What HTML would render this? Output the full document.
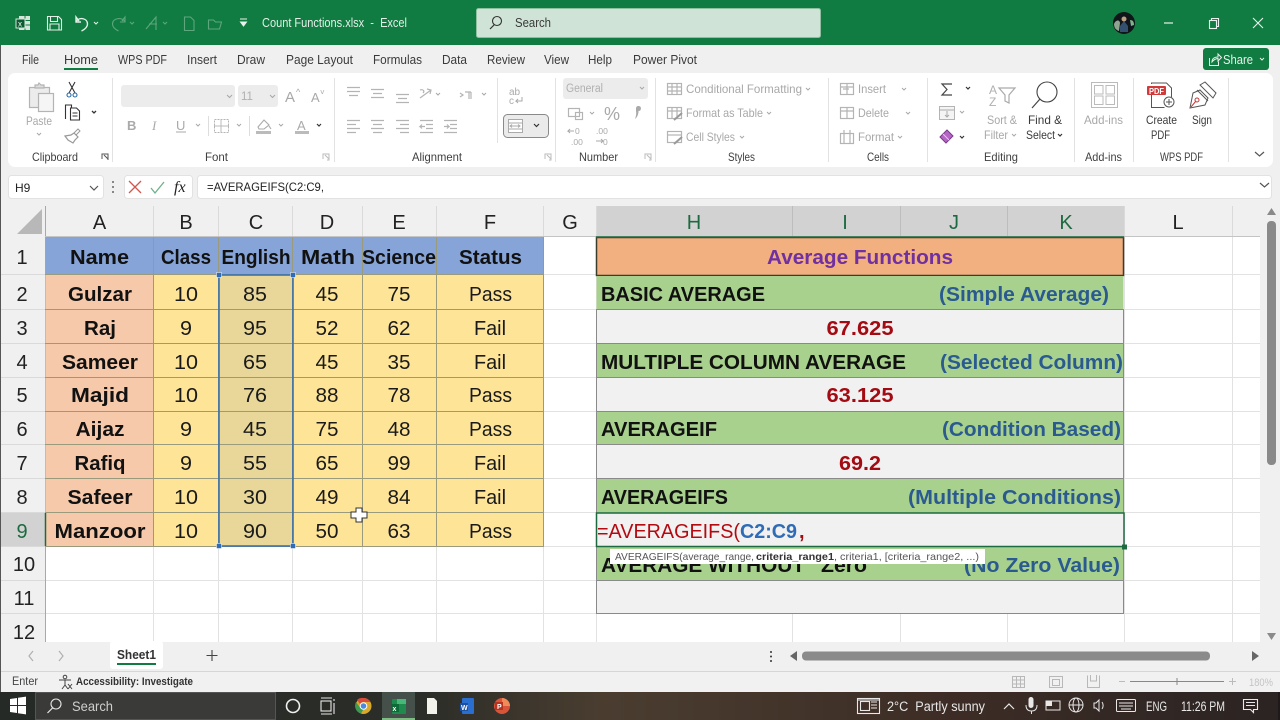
<!DOCTYPE html>
<html><head><meta charset="utf-8"><title>Count Functions.xlsx - Excel</title>
<style>
html,body{margin:0;padding:0;width:1280px;height:720px;overflow:hidden;background:#fff}
svg{display:block}
text{font-family:"Liberation Sans",sans-serif;white-space:pre}
.m{font-size:13px;fill:#3a3a3a}
.l{font-size:12px;fill:#404040}
.d{font-size:12px;fill:#a8a8a8}
.k{font-size:12px;fill:#3a3a3a}
.h{font-size:20px;fill:#222;text-anchor:middle}
.r{font-size:20px;fill:#222;text-anchor:middle}
.b{font-size:20px;font-weight:bold;fill:#111;text-anchor:middle}
.n{font-size:20px;fill:#1a1a1a;text-anchor:middle}
.rb{font-size:20px;font-weight:bold;fill:#111}
.bl{font-size:20px;font-weight:bold;fill:#2a5a8f}
.v{font-size:20px;font-weight:bold;fill:#a30a12;text-anchor:middle}
.gi{fill:none;stroke:#b4b4b4;stroke-width:1.2}
.di{fill:none;stroke:#555;stroke-width:1.2}
.ch{fill:none;stroke:#a8a8a8;stroke-width:1}
.cd{fill:none;stroke:#333;stroke-width:1.2}
</style></head><body>
<svg width="1280" height="720" viewBox="0 0 1280 720" xmlns="http://www.w3.org/2000/svg">
<defs><linearGradient id="tb" x1="0" x2="1" y1="0" y2="0"><stop offset="0" stop-color="#262a27"/><stop offset=".33" stop-color="#2b2d28"/><stop offset=".47" stop-color="#4a3d30"/><stop offset=".75" stop-color="#3c2c25"/><stop offset="1" stop-color="#2b2423"/></linearGradient></defs>
<rect width="1280" height="720" fill="#fff"/>
<!-- title bar -->
<rect width="1280" height="45" fill="#107c41"/>
<rect x="19" y="16" width="11" height="14" fill="#d5e5da"/><path d="M25 16v14M19 20.500h11M19 25h11" stroke="#107c41"/><rect x="16" y="19" width="9" height="9" fill="#0a5c30" stroke="#d5e5da"/><text x="18" y="26.500" font-size="8" fill="#fff">x</text>
<g fill="none" stroke="#e4efe8" stroke-width="1.100"><path d="M47.500 16.500h11l3 3v10.500h-14z"/><path d="M50.500 16.500v5h7v-5M50 30v-6h9v6"/><path d="M79 21l-3-4v5h5M76.500 21c3-4 11-3 11 3 0 3-2 5-6 7" stroke-width="1.400"/><path d="M94 22l2 2 2-2"/></g>
<g fill="none" stroke="#5ea67e" stroke-width="1.100"><path d="M122 21l3-4v5h-5M124.500 21c-3-4-12-3-12 3 0 3 2 5 6 7"/><path d="M130 22l2 2 2-2"/><path d="M146 29l10-12v13M149 24h8"/><path d="M163 22l2 2 2-2"/><path d="M184.500 17h6l3.500 3.500v10h-9.500z"/><path d="M208.500 20h5l2 2h6l-2 7h-11z"/></g>
<path d="M240 19h7M240.500 22h6l-3 4z" fill="#e8f2ec" stroke="#e8f2ec"/>
<text x="262" y="27" font-size="12.500" fill="#e4efe8" textLength="145" lengthAdjust="spacingAndGlyphs">Count Functions.xlsx  -  Excel</text>
<rect x="476.500" y="8.500" width="344" height="29" rx="2" fill="#cfe3d6" stroke="#8fbfa0"/>
<circle cx="497" cy="21" r="4.500" fill="none" stroke="#333" stroke-width="1.100"/><path d="M494 25l-4 4" stroke="#333" stroke-width="1.200"/>
<text x="515" y="27" font-size="13" fill="#3a3a3a" textLength="36" lengthAdjust="spacingAndGlyphs">Search</text>
<circle cx="1124" cy="23" r="11" fill="#10151a"/><path d="M1114 24c2-5 6-4 6-1l-1 8c-3-1-5-3-5-7z" fill="#8fa58f"/><path d="M1120 32v-6l4-5 4 5v6z" fill="#33506e"/><path d="M1130 20c3 0 4 2 4 5l-3 1z" fill="#7db48b"/><circle cx="1124" cy="19" r="2.500" fill="#c0a080"/>
<path d="M1164 23h9" stroke="#e8f2ec" stroke-width="1.200"/>
<g fill="none" stroke="#e8f2ec" stroke-width="1.100"><rect x="1209.500" y="20.500" width="7" height="8"/><path d="M1211.500 20.500v-2h7v8h-2"/><path d="M1253 18l10 10M1263 18l-10 10"/></g>
<!-- menu bar + ribbon bg -->
<rect y="45" width="1280" height="161" fill="#f0f0f0"/>
<text class="m" x="22" y="64" textLength="17" lengthAdjust="spacingAndGlyphs">File</text>
<text class="m" x="64" y="64" textLength="34" lengthAdjust="spacingAndGlyphs">Home</text>
<rect x="64" y="68" width="34" height="2" fill="#107c41"/>
<text class="m" x="118" y="64" textLength="49" lengthAdjust="spacingAndGlyphs">WPS PDF</text>
<text class="m" x="187" y="64" textLength="30" lengthAdjust="spacingAndGlyphs">Insert</text>
<text class="m" x="237" y="64" textLength="28" lengthAdjust="spacingAndGlyphs">Draw</text>
<text class="m" x="286" y="64" textLength="67" lengthAdjust="spacingAndGlyphs">Page Layout</text>
<text class="m" x="373" y="64" textLength="49" lengthAdjust="spacingAndGlyphs">Formulas</text>
<text class="m" x="442" y="64" textLength="25" lengthAdjust="spacingAndGlyphs">Data</text>
<text class="m" x="487" y="64" textLength="38" lengthAdjust="spacingAndGlyphs">Review</text>
<text class="m" x="544" y="64" textLength="25" lengthAdjust="spacingAndGlyphs">View</text>
<text class="m" x="588" y="64" textLength="24" lengthAdjust="spacingAndGlyphs">Help</text>
<text class="m" x="633" y="64" textLength="64" lengthAdjust="spacingAndGlyphs">Power Pivot</text>
<rect x="1203" y="48" width="66" height="22" rx="3" fill="#107c41"/>
<g fill="none" stroke="#e8f2ec" stroke-width="1"><path d="M1209.500 58v7.500h9v-4"/><path d="M1212 62c0-3 2-5 6-5v-3l3.500 3.500-3.500 3.500v-2.500c-2 0-4 1-6 3.500z"/><path d="M1260 58l2 2 2-2"/></g>
<text x="1223" y="64" font-size="13" fill="#e8f2ec" textLength="30" lengthAdjust="spacingAndGlyphs">Share</text>
<rect x="8" y="73" width="1265" height="94" rx="7" fill="#fff"/>
<!-- separators -->
<g stroke="#e2e2e2"><path d="M112.500 78v84M334.500 78v84M497.500 78v65M555.500 78v84M655.500 78v84M828.500 78v84M927.500 78v84M1074.500 78v84M1133.500 78v84M1228.500 78v84"/></g>
<!-- group labels -->
<text class="l" x="32" y="161" textLength="46" lengthAdjust="spacingAndGlyphs">Clipboard</text>
<text class="l" x="205" y="161" textLength="23" lengthAdjust="spacingAndGlyphs">Font</text>
<text class="l" x="412" y="161" textLength="50" lengthAdjust="spacingAndGlyphs">Alignment</text>
<text class="l" x="579" y="161" textLength="39" lengthAdjust="spacingAndGlyphs">Number</text>
<text class="l" x="728" y="161" textLength="27" lengthAdjust="spacingAndGlyphs">Styles</text>
<text class="l" x="867" y="161" textLength="22" lengthAdjust="spacingAndGlyphs">Cells</text>
<text class="l" x="984" y="161" textLength="34" lengthAdjust="spacingAndGlyphs">Editing</text>
<text class="l" x="1085" y="161" textLength="37" lengthAdjust="spacingAndGlyphs">Add-ins</text>
<text class="l" x="1160" y="161" textLength="43" lengthAdjust="spacingAndGlyphs">WPS PDF</text>
<!-- dialog launchers -->
<g fill="none" stroke="#555" stroke-width="1"><path d="M102 159v-5h6v6M104 155l4 4"/></g>
<g fill="none" stroke="#bbb" stroke-width="1"><path d="M323 159v-5h6v6h-2M325 155l4 4M545 159v-5h6v6h-2M547 155l4 4M645 159v-5h6v6h-2M647 155l4 4"/></g>
<!-- clipboard -->
<g class="gi" fill="#eee"><path d="M29.500 87.500h20v20h-20z" fill="#ececec"/><path d="M35 87v-2h3l1-2 2 2h3v3h-9z" fill="#ddd"/><rect x="38.500" y="93.500" width="15" height="18" fill="#f5f5f5"/></g>
<text class="d" x="26" y="125" textLength="26" lengthAdjust="spacingAndGlyphs">Paste</text>
<path class="ch" d="M37 133l2 2 2-2"/>
<g fill="none" stroke-width="1.100"><path d="M69 82l6 11M75 82l-6 11" stroke="#333"/><circle cx="69" cy="95" r="2" stroke="#2a6aa8"/><circle cx="75" cy="95" r="2" stroke="#2a6aa8"/></g>
<g fill="none" stroke="#333" stroke-width="1.100"><path d="M65.500 119v-14h6v3"/><path d="M70.500 108h6l3 3v9h-9zM72.500 113h5M72.500 116h5"/><path d="M92 111l2 2 2-2" stroke-width="1.300"/></g>
<path d="M65 136l6-1 3-2 4 4-3 3-2 3-5-3z" fill="none" stroke="#999" stroke-width="1.200"/><path d="M74 133l4-4 2 2-4 4" fill="none" stroke="#999"/>
<!-- font -->
<rect x="121" y="85" width="114" height="22" rx="3" fill="#ececec"/><rect x="238" y="85" width="40" height="22" rx="3" fill="#ececec"/>
<path class="ch" d="M227 95l2.500 2.500 2.500-2.500M270 95l2.500 2.500 2.500-2.500"/>
<text x="241" y="100" font-size="11.500" fill="#b0b0b0">11</text>
<text x="285" y="102" font-size="15" fill="#a8a8a8">A</text><text x="296" y="95" font-size="9" fill="#a8a8a8">^</text>
<text x="311" y="102" font-size="13" fill="#a8a8a8">A</text><text x="320" y="95" font-size="8" fill="#a8a8a8">˅</text>
<text x="127" y="130" font-size="13" font-weight="bold" fill="#aaa">B</text>
<text x="152" y="130" font-size="13" style="font-style:italic;font-family:'Liberation Serif',serif" fill="#aaa">I</text>
<text x="176" y="130" font-size="13" fill="#aaa">U</text><path d="M176 132h10" stroke="#aaa"/>
<path class="ch" d="M196 124l2 2 2-2"/><path d="M208.500 116v20M249.500 116v20" stroke="#ddd"/>
<rect x="214.500" y="119.500" width="14" height="13" fill="none" stroke="#b4b4b4" stroke-dasharray="2 1"/><path d="M214 126h15M221 119v14" stroke="#bbb"/>
<path class="ch" d="M237 124l2 2 2-2"/>
<path d="M258 127l6-7 5 5-5 4h-5zM269 126l2 3" fill="none" stroke="#aaa" stroke-width="1.100"/><rect x="256" y="131" width="15" height="3" fill="#bbb"/>
<path class="ch" d="M279 124l2 2 2-2"/>
<text x="297" y="130" font-size="13" fill="#aaa">A</text><rect x="295" y="131" width="14" height="3" fill="#bbb"/>
<path class="cd" d="M317 124l2 2 2-2"/>
<!-- alignment -->
<g class="gi"><path d="M347 87.500h13M347 91.500h13M349 95.500h9"/><path d="M371 89.500h13M373 93.500h9M371 97.500h13"/><path d="M396 94.500h13M398 98.500h9M396 102.500h13"/>
<path d="M420 98l11-8M427 89l4 1-1 4M420 90c3-1 5 1 3 3"/>
<path d="M460 93l3 2-3 2"/><path d="M465 92h6M469 92v7M471 92v7" /><path class="ch" d="M436 93l2 2 2-2M482 93l2 2 2-2"/>
<path d="M347 120.500h13M347 124.500h9M347 128.500h13M347 132.500h9"/><path d="M371 120.500h13M373 124.500h9M371 128.500h13M373 132.500h9"/><path d="M396 120.500h13M400 124.500h9M396 128.500h13M400 132.500h9"/>
<path d="M420 120.500h13M426 124.500h7M426 128.500h7M420 132.500h13M425 126.500h-5l2-2M420 126.500l2 2"/><path d="M444 120.500h13M450 124.500h7M450 128.500h7M444 132.500h13M444 126.500h5l-2-2M449 126.500l-2 2"/></g>
<text x="509" y="95" font-size="10" fill="#aaa">ab</text><text x="509" y="104" font-size="10" fill="#aaa">c</text><path d="M522 97v4h-6l2-2M516 101l2 2" fill="none" stroke="#aaa"/>
<rect x="503.500" y="114.500" width="45" height="23" rx="4" fill="#ebebeb" stroke="#8a8a8a"/>
<rect x="508.500" y="119.500" width="14" height="13" fill="#fff" stroke="#aaa"/><path d="M508 123h14M508 129h14M511 126h8M512 124.500l-2 1.500 2 1.500M518 124.500l2 1.500-2 1.500" stroke="#aaa" fill="none"/>
<path class="cd" d="M534 124l2.500 2.500 2.500-2.500"/>
<!-- number -->
<rect x="563" y="78" width="85" height="21" rx="3" fill="#ececec"/>
<text x="566" y="92" font-size="11.500" fill="#b0b0b0" textLength="37" lengthAdjust="spacingAndGlyphs">General</text>
<path class="ch" d="M640 87l2 2 2-2"/>
<rect x="568.500" y="108.500" width="11" height="8" class="gi"/><rect x="575.500" y="112.500" width="7" height="7" class="gi" fill="#fff"/>
<path class="ch" d="M590 112l2 2 2-2"/>
<text x="604" y="120" font-size="18" fill="#a8a8a8">%</text><path d="M636 108a2.500 2.500 0 1 1 2.500 3c0 3-1 6-3.500 8 1-3 1.500-5 1-8z" fill="#aaa"/>
<text x="575" y="134" font-size="8.500" fill="#aaa">0</text><text x="571" y="145" font-size="8.500" fill="#aaa">.00</text><path class="ch" d="M574 131h-6l2-2M568 131l2 2"/>
<text x="596" y="134" font-size="8.500" fill="#aaa">.00</text><text x="603" y="145" font-size="8.500" fill="#aaa">0</text><path class="ch" d="M596 141h7l-2-2M603 141l-2 2"/>
<!-- styles -->
<g class="gi"><rect x="667.500" y="83.500" width="14" height="11"/><path d="M667 87h15M667 91h15M672 83v11M677 83v11"/><rect x="667.500" y="107.500" width="14" height="11"/><path d="M667 111h15M672 107v11M677 107v11"/><path d="M674 120l8-7" stroke-width="2" stroke="#999"/><rect x="667.500" y="131.500" width="14" height="11"/><path d="M674 144l8-7" stroke-width="2" stroke="#999"/><path d="M667 135h15"/></g>
<text class="d" x="686" y="93" textLength="116" lengthAdjust="spacingAndGlyphs">Conditional Formatting</text><path class="ch" d="M806 88l2 2 2-2"/>
<text class="d" x="686" y="117" textLength="77" lengthAdjust="spacingAndGlyphs">Format as Table</text><path class="ch" d="M767 112l2 2 2-2"/>
<text class="d" x="686" y="141" textLength="49" lengthAdjust="spacingAndGlyphs">Cell Styles</text><path class="ch" d="M740 136l2 2 2-2"/>
<!-- cells -->
<g class="gi"><rect x="840.500" y="83.500" width="13" height="11"/><path d="M840 87h14M847 83v11M843 89h6"/><rect x="840.500" y="107.500" width="13" height="11"/><path d="M840 111h14M847 107v11"/><rect x="840.500" y="133.500" width="13" height="10"/><path d="M844 130v14M850 130v14"/></g>
<text class="d" x="858" y="93" textLength="28" lengthAdjust="spacingAndGlyphs">Insert</text><path class="ch" d="M902 88l2 2 2-2"/>
<text class="d" x="858" y="117" textLength="31" lengthAdjust="spacingAndGlyphs">Delete</text><path class="ch" d="M906 112l2 2 2-2"/>
<text class="d" x="858" y="141" textLength="36" lengthAdjust="spacingAndGlyphs">Format</text><path class="ch" d="M898 136l2 2 2-2"/>
<!-- editing -->
<path d="M952 84h-10l5 5.500-5 5.500h10" fill="none" stroke="#444" stroke-width="1.200"/><path class="cd" d="M966 87l2 2 2-2"/>
<rect x="939.500" y="106.500" width="15" height="13" fill="#f4f4f4" stroke="#b4b4b4"/><path d="M939 110h15M947 111v6M945 115l2 2 2-2" stroke="#aaa" fill="none"/><path class="ch" d="M960 111l2 2 2-2"/>
<path d="M940 137l7-7 6 6-7 7z" fill="#b565c4" stroke="#7a3a88"/><path d="M943 134l6 6" stroke="#e6c6ec"/><path class="cd" d="M960 136l2 2 2-2"/>
<text x="989" y="94" font-size="12" fill="#b0b0b0">A</text><text x="989" y="106" font-size="12" fill="#b0b0b0">Z</text>
<path d="M999 88h16l-6 7v8l-4-2v-6z" fill="none" stroke="#aaa" stroke-width="1.200"/>
<text class="d" x="987" y="124" textLength="30" lengthAdjust="spacingAndGlyphs">Sort &amp;</text>
<text class="d" x="984" y="139" textLength="24" lengthAdjust="spacingAndGlyphs">Filter</text><path class="ch" d="M1012 134l2 2 2-2"/>
<circle cx="1047" cy="92" r="10" fill="none" stroke="#444" stroke-width="1.100"/><path d="M1040 99l-8 9" stroke="#444" stroke-width="1.200"/>
<text class="k" x="1028" y="124" textLength="34" lengthAdjust="spacingAndGlyphs">Find &amp;</text>
<text class="k" x="1026" y="139" textLength="29" lengthAdjust="spacingAndGlyphs">Select</text><path class="cd" d="M1058 134l2 2 2-2"/>
<rect x="1091.500" y="82.500" width="26" height="25" fill="none" stroke="#bbb"/><rect x="1094.500" y="85.500" width="8.500" height="8.500" fill="none" stroke="#bbb"/><rect x="1106" y="85.500" width="8.500" height="8.500" fill="none" stroke="#bbb"/><rect x="1094.500" y="96" width="8.500" height="8.500" fill="none" stroke="#bbb"/><rect x="1106" y="96" width="8.500" height="8.500" fill="none" stroke="#bbb"/>
<text class="d" x="1084" y="124" textLength="39" lengthAdjust="spacingAndGlyphs">Add-ins</text>
<path d="M1151.500 94v13.500h13M1151.500 84v-1h15l5 5v9" fill="none" stroke="#555"/>
<rect x="1147" y="86" width="19" height="9" rx="1" fill="#cf3b3b"/><text x="1149" y="94" font-size="8" font-weight="bold" fill="#fff" textLength="15" lengthAdjust="spacingAndGlyphs">PDF</text>
<circle cx="1169" cy="102" r="5" fill="#fff" stroke="#555"/><path d="M1169 99v6M1166 102h6" stroke="#555"/>
<text class="k" x="1146" y="124" textLength="31" lengthAdjust="spacingAndGlyphs">Create</text>
<text class="k" x="1151" y="139" textLength="19" lengthAdjust="spacingAndGlyphs">PDF</text>
<path d="M1190 108l3-15 7-3 8 8-3 7zM1200 85l5-3 11 11-3 5zM1197 90l11 11" fill="none" stroke="#555"/><circle cx="1197" cy="100" r="2" fill="none" stroke="#c23b3b"/><path d="M1191 107l5-6" stroke="#c23b3b"/>
<text class="k" x="1192" y="124" textLength="20" lengthAdjust="spacingAndGlyphs">Sign</text>
<path d="M1255 152l4.500 4 4.500-4" fill="none" stroke="#555" stroke-width="1.200"/>
<!-- formula bar -->
<rect x="8.500" y="175.500" width="95" height="23" rx="3" fill="#fff" stroke="#e2e2e2"/>
<text x="15" y="192" font-size="12" fill="#222">H9</text>
<path d="M90 186l4 4 4-4" fill="none" stroke="#555" stroke-width="1.200"/>
<circle cx="113" cy="182" r="1" fill="#666"/><circle cx="113" cy="187" r="1" fill="#666"/><circle cx="113" cy="192" r="1" fill="#666"/>
<rect x="124.500" y="175.500" width="68" height="23" rx="3" fill="#fff" stroke="#e2e2e2"/>
<path d="M129 181l12 12M141 181l-12 12" stroke="#d0574f" stroke-width="1.300"/>
<path d="M151 188l4 5 9-11" fill="none" stroke="#6fb08a" stroke-width="1.300"/>
<text x="174" y="192" font-size="16" style="font-style:italic;font-family:'Liberation Serif',serif" fill="#222">fx</text>
<rect x="197.500" y="175.500" width="1074" height="23" rx="3" fill="#fff" stroke="#e2e2e2"/>
<text x="207" y="191" font-size="12" fill="#222" textLength="117" lengthAdjust="spacingAndGlyphs">=AVERAGEIFS(C2:C9,</text>
<path d="M1260 183l4.500 4 4.500-4" fill="none" stroke="#555" stroke-width="1.200"/>
<!-- headers -->
<rect x="0" y="206" width="45" height="436" fill="#f0f0f0"/>
<rect x="45" y="206" width="1215" height="31" fill="#f0f0f0"/>
<path d="M42 209v25h-25z" fill="#b8b8b8"/>
<rect x="596" y="206" width="528" height="31" fill="#d2d2d2"/>
<rect x="0" y="513" width="45" height="33" fill="#d2d2d2"/>
<g stroke="#dadada"><path d="M153.500 206v31M218.500 206v31M292.500 206v31M362.500 206v31M436.500 206v31M543.500 206v31M596.500 206v31M1124.500 206v31M1232.500 206v31"/><path d="M792.500 206v31M900.500 206v31M1007.500 206v31" stroke="#bdbdbd"/><path d="M0 274.500h45M0 309.500h45M0 343.500h45M0 377.500h45M0 411.500h45M0 444.500h45M0 478.500h45M0 512.500h45M0 546.500h45M0 580.500h45M0 613.500h45"/></g>
<text class="h" x="99.500" y="229">A</text><text class="h" x="186" y="229">B</text><text class="h" x="256" y="229">C</text><text class="h" x="327" y="229">D</text><text class="h" x="399" y="229">E</text><text class="h" x="490" y="229">F</text><text class="h" x="570" y="229">G</text>
<text class="h" style="fill:#1c6b40" x="694" y="229">H</text><text class="h" style="fill:#1c6b40" x="845" y="229">I</text><text class="h" style="fill:#1c6b40" x="954" y="229">J</text><text class="h" style="fill:#1c6b40" x="1066" y="229">K</text>
<text class="h" x="1178" y="229">L</text>
<text class="r" x="22" y="264">1</text><text class="r" x="22" y="301">2</text><text class="r" x="22" y="335">3</text><text class="r" x="22" y="369">4</text><text class="r" x="22" y="402">5</text><text class="r" x="22" y="436">6</text><text class="r" x="22" y="470">7</text><text class="r" x="22" y="504">8</text><text class="r" style="fill:#1c6b40" x="22" y="538">9</text><text class="r" x="24" y="571">10</text><text class="r" x="24" y="605">11</text><text class="r" x="24" y="639">12</text>
<!-- gridlines -->
<g stroke="#e2e2e2"><path d="M153.500 237v405M218.500 237v405M292.500 237v405M362.500 237v405M436.500 237v405M543.500 237v405M596.500 237v405M792.500 613v29M900.500 613v29M1007.500 613v29M1124.500 237v405M1232.500 237v405"/>
<path d="M45 274.500h1215M45 309.500h1215M45 343.500h1215M45 377.500h1215M45 411.500h1215M45 444.500h1215M45 478.500h1215M45 512.500h1215M45 546.500h1215M45 580.500h1215M45 613.500h1215"/></g>
<path d="M45.500 206v436" stroke="#a8a8a8"/><path d="M45 236.500h1215" stroke="#c4c4c4"/>
<!-- left table -->
<rect x="45.500" y="237" width="498" height="38" fill="#86a4d8"/>
<rect x="45.500" y="275" width="108" height="271" fill="#f6c9ab"/>
<rect x="153.500" y="275" width="390" height="271" fill="#fee496"/>
<rect x="219" y="275" width="74" height="271" fill="#e8d799"/>
<g stroke="#9a9a7c"><path d="M153.500 237v309M218.500 237v309M292.500 237v309M362.500 237v309M436.500 237v309M543.500 237v309"/>
<path d="M45 274.500h499M45 309.500h499M45 343.500h499M45 377.500h499M45 411.500h499M45 444.500h499M45 478.500h499M45 512.500h499M45 546.500h499"/></g>
<text class="b" x="99.500" y="264" textLength="59" lengthAdjust="spacingAndGlyphs">Name</text><text class="b" x="186" y="264" textLength="50" lengthAdjust="spacingAndGlyphs">Class</text><text class="b" x="256" y="264" textLength="69" lengthAdjust="spacingAndGlyphs">English</text><text class="b" x="328" y="264" textLength="54" lengthAdjust="spacingAndGlyphs">Math</text><text class="b" x="399" y="264" textLength="74" lengthAdjust="spacingAndGlyphs">Science</text><text class="b" x="490.500" y="264" textLength="63" lengthAdjust="spacingAndGlyphs">Status</text>
<text class="b" x="100" y="301" textLength="64" lengthAdjust="spacingAndGlyphs">Gulzar</text><text class="n" x="186" y="301" textLength="24" lengthAdjust="spacingAndGlyphs">10</text><text class="n" x="255" y="301" textLength="24" lengthAdjust="spacingAndGlyphs">85</text><text class="n" x="327" y="301" textLength="23" lengthAdjust="spacingAndGlyphs">45</text><text class="n" x="399" y="301" textLength="23" lengthAdjust="spacingAndGlyphs">75</text><text class="n" x="490.500" y="301" textLength="43" lengthAdjust="spacingAndGlyphs">Pass</text>
<text class="b" x="100" y="335" textLength="32" lengthAdjust="spacingAndGlyphs">Raj</text><text class="n" x="186" y="335" textLength="12" lengthAdjust="spacingAndGlyphs">9</text><text class="n" x="255" y="335" textLength="24" lengthAdjust="spacingAndGlyphs">95</text><text class="n" x="327" y="335" textLength="23" lengthAdjust="spacingAndGlyphs">52</text><text class="n" x="399" y="335" textLength="23" lengthAdjust="spacingAndGlyphs">62</text><text class="n" x="490" y="335" textLength="32" lengthAdjust="spacingAndGlyphs">Fail</text>
<text class="b" x="100" y="369" textLength="76" lengthAdjust="spacingAndGlyphs">Sameer</text><text class="n" x="186" y="369" textLength="24" lengthAdjust="spacingAndGlyphs">10</text><text class="n" x="255" y="369" textLength="24" lengthAdjust="spacingAndGlyphs">65</text><text class="n" x="327" y="369" textLength="23" lengthAdjust="spacingAndGlyphs">45</text><text class="n" x="399" y="369" textLength="23" lengthAdjust="spacingAndGlyphs">35</text><text class="n" x="490" y="369" textLength="32" lengthAdjust="spacingAndGlyphs">Fail</text>
<text class="b" x="100" y="402" textLength="58" lengthAdjust="spacingAndGlyphs">Majid</text><text class="n" x="186" y="402" textLength="24" lengthAdjust="spacingAndGlyphs">10</text><text class="n" x="255" y="402" textLength="24" lengthAdjust="spacingAndGlyphs">76</text><text class="n" x="327" y="402" textLength="23" lengthAdjust="spacingAndGlyphs">88</text><text class="n" x="399" y="402" textLength="23" lengthAdjust="spacingAndGlyphs">78</text><text class="n" x="490.500" y="402" textLength="43" lengthAdjust="spacingAndGlyphs">Pass</text>
<text class="b" x="100" y="436" textLength="49" lengthAdjust="spacingAndGlyphs">Aijaz</text><text class="n" x="186" y="436" textLength="12" lengthAdjust="spacingAndGlyphs">9</text><text class="n" x="255" y="436" textLength="24" lengthAdjust="spacingAndGlyphs">45</text><text class="n" x="327" y="436" textLength="23" lengthAdjust="spacingAndGlyphs">75</text><text class="n" x="399" y="436" textLength="23" lengthAdjust="spacingAndGlyphs">48</text><text class="n" x="490.500" y="436" textLength="43" lengthAdjust="spacingAndGlyphs">Pass</text>
<text class="b" x="100" y="470" textLength="51" lengthAdjust="spacingAndGlyphs">Rafiq</text><text class="n" x="186" y="470" textLength="12" lengthAdjust="spacingAndGlyphs">9</text><text class="n" x="255" y="470" textLength="24" lengthAdjust="spacingAndGlyphs">55</text><text class="n" x="327" y="470" textLength="23" lengthAdjust="spacingAndGlyphs">65</text><text class="n" x="399" y="470" textLength="23" lengthAdjust="spacingAndGlyphs">99</text><text class="n" x="490" y="470" textLength="32" lengthAdjust="spacingAndGlyphs">Fail</text>
<text class="b" x="100" y="504" textLength="65" lengthAdjust="spacingAndGlyphs">Safeer</text><text class="n" x="186" y="504" textLength="24" lengthAdjust="spacingAndGlyphs">10</text><text class="n" x="255" y="504" textLength="24" lengthAdjust="spacingAndGlyphs">30</text><text class="n" x="327" y="504" textLength="23" lengthAdjust="spacingAndGlyphs">49</text><text class="n" x="399" y="504" textLength="23" lengthAdjust="spacingAndGlyphs">84</text><text class="n" x="490" y="504" textLength="32" lengthAdjust="spacingAndGlyphs">Fail</text>
<text class="b" x="100" y="538" textLength="91" lengthAdjust="spacingAndGlyphs">Manzoor</text><text class="n" x="186" y="538" textLength="24" lengthAdjust="spacingAndGlyphs">10</text><text class="n" x="255" y="538" textLength="24" lengthAdjust="spacingAndGlyphs">90</text><text class="n" x="327" y="538" textLength="23" lengthAdjust="spacingAndGlyphs">50</text><text class="n" x="399" y="538" textLength="23" lengthAdjust="spacingAndGlyphs">63</text><text class="n" x="490.500" y="538" textLength="43" lengthAdjust="spacingAndGlyphs">Pass</text>
<!-- C2:C9 range -->
<rect x="219" y="275" width="74" height="271" fill="none" stroke="#2f6cb5" stroke-width="1.500"/>
<g fill="#2f6cb5" stroke="#fff" stroke-width=".5"><rect x="216.500" y="272.500" width="5" height="5"/><rect x="290.500" y="272.500" width="5" height="5"/><rect x="216.500" y="543.500" width="5" height="5"/><rect x="290.500" y="543.500" width="5" height="5"/></g>
<path d="M45.500 513v33" stroke="#1c6b40" stroke-width="1.500"/>
<!-- right table -->
<rect x="596.500" y="237.500" width="527" height="38" fill="#f2af80" stroke="#3c3c2c" stroke-width="1.500"/>
<path d="M596 237h528" stroke="#1c6b40" stroke-width="1.500"/>
<rect x="596.500" y="276" width="527" height="337.500" fill="#f1f1f1"/>
<g fill="#a9d18e"><rect x="596.500" y="276" width="527" height="33.500"/><rect x="596.500" y="343.500" width="527" height="34"/><rect x="596.500" y="411.500" width="527" height="33"/><rect x="596.500" y="478.500" width="527" height="34"/><rect x="596.500" y="546.500" width="527" height="34"/></g>
<g stroke="#8a8a8a" fill="none"><path d="M596.500 309.500v304h527v-304"/><path d="M596 309.500h528M596 343.500h528M596 377.500h528M596 411.500h528M596 444.500h528M596 478.500h528M596 580.500h528"/></g>
<text x="860" y="264" font-size="20" font-weight="bold" fill="#7030a0" text-anchor="middle" textLength="186" lengthAdjust="spacingAndGlyphs">Average Functions</text>
<text class="rb" x="601" y="301" textLength="164" lengthAdjust="spacingAndGlyphs">BASIC AVERAGE</text>
<text class="bl" x="939" y="301" textLength="170" lengthAdjust="spacingAndGlyphs">(Simple Average)</text>
<text class="v" x="860" y="335" textLength="67" lengthAdjust="spacingAndGlyphs">67.625</text>
<text class="rb" x="601" y="369" textLength="305" lengthAdjust="spacingAndGlyphs">MULTIPLE COLUMN AVERAGE</text>
<text class="bl" x="940" y="369" textLength="183" lengthAdjust="spacingAndGlyphs">(Selected Column)</text>
<text class="v" x="860" y="402" textLength="67" lengthAdjust="spacingAndGlyphs">63.125</text>
<text class="rb" x="601" y="436" textLength="116" lengthAdjust="spacingAndGlyphs">AVERAGEIF</text>
<text class="bl" x="942" y="436" textLength="179" lengthAdjust="spacingAndGlyphs">(Condition Based)</text>
<text class="v" x="860" y="470" textLength="42" lengthAdjust="spacingAndGlyphs">69.2</text>
<text class="rb" x="601" y="504" textLength="127" lengthAdjust="spacingAndGlyphs">AVERAGEIFS</text>
<text class="bl" x="908" y="504" textLength="213" lengthAdjust="spacingAndGlyphs">(Multiple Conditions)</text>
<text class="rb" x="601" y="572" textLength="204" lengthAdjust="spacingAndGlyphs">AVERAGE WITHOUT</text>
<text class="rb" x="821" y="572" textLength="46" lengthAdjust="spacingAndGlyphs">Zero</text>
<text class="bl" x="964" y="572" textLength="156" lengthAdjust="spacingAndGlyphs">(No Zero Value)</text>
<!-- active H9 -->
<rect x="596.500" y="513" width="527.500" height="33.500" fill="#f1f1f1" stroke="#1c6b40" stroke-width="1.500"/>
<rect x="1122" y="544.500" width="5" height="5" fill="#1c6b40"/>
<text x="597" y="538" font-size="20" fill="#b30a12" textLength="143" lengthAdjust="spacingAndGlyphs">=AVERAGEIFS(</text>
<text x="740" y="538" font-size="20" fill="#2f6cb5" font-weight="bold" textLength="57" lengthAdjust="spacingAndGlyphs">C2:C9</text>
<text x="799" y="538" font-size="20" fill="#a30a12" font-weight="bold">,</text>
<!-- tooltip -->
<rect x="610" y="549" width="375" height="15" fill="#fff"/>
<text x="615" y="560" font-size="10.500" fill="#555" textLength="139" lengthAdjust="spacingAndGlyphs">AVERAGEIFS(average_range,</text>
<text x="756" y="560" font-size="10.500" font-weight="bold" fill="#333" textLength="78" lengthAdjust="spacingAndGlyphs">criteria_range1</text>
<text x="834" y="560" font-size="10.500" fill="#555" textLength="145" lengthAdjust="spacingAndGlyphs">, criteria1, [criteria_range2, ...)</text>
<!-- cursor -->
<path d="M356 508h6v4h5v6h-5v4h-6v-4h-5v-6h5z" fill="#fff" stroke="#333"/>
<!-- vertical scrollbar -->
<rect x="1260" y="206" width="20" height="436" fill="#f0f0f0"/>
<path d="M1271.500 208l-4.500 7h9z" fill="#8a8a8a"/>
<rect x="1267" y="221" width="9" height="244" rx="4" fill="#8a8a8a"/>
<path d="M1271.500 640l-4.500-7h9z" fill="#8a8a8a"/>
<!-- sheet bar -->
<rect x="0" y="642" width="1280" height="30" fill="#f0f0f0"/>
<path d="M0 671.500h1280" stroke="#d6d6d6"/>
<rect x="110" y="641" width="53" height="28" rx="3" fill="#fff"/>
<text x="117" y="659" font-size="12.500" font-weight="bold" fill="#333" textLength="39" lengthAdjust="spacingAndGlyphs">Sheet1</text>
<rect x="117" y="663" width="39" height="2" fill="#107c41"/>
<path d="M33 651l-4 5 4 5M59 651l4 5-4 5" fill="none" stroke="#b0b0b0" stroke-width="1.200"/>
<path d="M212 650v11M206.500 655.500h11" stroke="#444" stroke-width="1.100"/>
<circle cx="771" cy="652" r="1" fill="#333"/><circle cx="771" cy="656.500" r="1" fill="#333"/><circle cx="771" cy="661" r="1" fill="#333"/>
<path d="M790 656l7-5v10z" fill="#666"/><path d="M1259 656l-7-5v10z" fill="#666"/>
<rect x="802" y="651.500" width="408" height="9" rx="4" fill="#8a8a8a"/>
<!-- status bar -->
<rect x="0" y="672" width="1280" height="20" fill="#f1f1f1"/>
<text x="12" y="685" font-size="11.500" fill="#444" textLength="26" lengthAdjust="spacingAndGlyphs">Enter</text>
<g fill="none" stroke="#444"><circle cx="65" cy="677" r="1.800"/><path d="M59 680h12M65 680v5l-3 4M65 685l3 4M68 684l4 5M72 684l-4 5"/></g>
<text x="76" y="685" font-size="11" font-weight="bold" fill="#333" textLength="117" lengthAdjust="spacingAndGlyphs">Accessibility: Investigate</text>
<g fill="none" stroke="#b8b8b8"><rect x="1012.500" y="676.500" width="12" height="11"/><path d="M1012 680h13M1012 684h13M1016.500 676v12M1020.500 676v12"/><rect x="1049.500" y="676.500" width="13" height="11"/><rect x="1052.500" y="679.500" width="7" height="6"/><path d="M1087.500 675.500v12h12v-12M1090.500 675v6h6v-6"/></g>
<path d="M1119 681.500h6M1229 681.500h7M1232.500 678v7" stroke="#bbb"/>
<path d="M1130 681.500h94M1177 678v7" stroke="#888"/>
<text x="1249" y="686" font-size="11" fill="#c4c4c4" textLength="24" lengthAdjust="spacingAndGlyphs">180%</text>
<path d="M0.500 45v647" stroke="#555"/>
<!-- taskbar -->
<rect x="0" y="692" width="1280" height="28" fill="url(#tb)"/>
<g fill="#fff"><path d="M10 699l7-1v7h-7zM18 697.800l8-1.200v8.400h-8zM10 706h7v7l-7-1zM18 706h8v8.400l-8-1.200z"/></g>
<rect x="35.500" y="692.500" width="240" height="27" fill="#3a3b38" stroke="#555"/>
<circle cx="56" cy="704" r="5" fill="none" stroke="#e8e8e8" stroke-width="1.100"/><path d="M52.500 708l-5 5" stroke="#e8e8e8" stroke-width="1.200"/>
<text x="72" y="711" font-size="14" fill="#cfcfcf" textLength="41" lengthAdjust="spacingAndGlyphs">Search</text>
<circle cx="293" cy="706" r="6.500" fill="none" stroke="#f0f0f0" stroke-width="1.600"/>
<g fill="none" stroke="#e8e8e8" stroke-width="1.100"><rect x="321" y="701" width="10" height="10"/><path d="M321 698h11M321 714h11M334 699v2M334 703v11"/></g>
<circle cx="363.500" cy="706" r="8" fill="#d9a92c"/><path d="M363.500 698a8 8 0 0 1 7 4h-7a4 4 0 0 0-3.500 2l-3-4a8 8 0 0 1 6.500-2z" fill="#d94b3d"/><path d="M356 702a8 8 0 0 0 5 11.500l3-5-4-1z" fill="#3f9a4f"/><circle cx="363.500" cy="706" r="3.300" fill="#4a8ae0" stroke="#fff"/>
<rect x="382" y="692" width="33" height="28" fill="#46504a"/><rect x="382" y="718" width="33" height="2" fill="#7dbb82"/>
<rect x="392" y="699" width="14" height="15" rx="1" fill="#1f8a4e"/><rect x="397" y="699" width="9" height="5" fill="#48b878"/><rect x="391" y="704" width="8" height="8" fill="#0e6b38"/><text x="392.500" y="711" font-size="7" font-weight="bold" fill="#fff">x</text>
<path d="M427 698h7l3 3v13h-10z" fill="#f2f2ea"/>
<rect x="462" y="698" width="12" height="16" rx="1" fill="#2a6fd0"/><rect x="460" y="703" width="8" height="8" fill="#1b4fa0"/><text x="461" y="710" font-size="7" font-weight="bold" fill="#fff">W</text>
<circle cx="502" cy="706" r="8" fill="#d9553a"/><path d="M502 698a8 8 0 0 1 8 8h-8z" fill="#f08a5a"/><rect x="495" y="702" width="8" height="8" fill="#b83220"/><text x="497" y="709" font-size="7" font-weight="bold" fill="#fff">P</text>
<g fill="none" stroke="#e8e8e8" stroke-width="1.100"><rect x="857.500" y="698.500" width="22" height="15"/><rect x="860.500" y="701.500" width="9" height="9"/><path d="M871 702h6M871 705h6M871 708h6M857 700h22"/></g>
<text x="887" y="711" font-size="13.500" fill="#e8e8e8" textLength="98" lengthAdjust="spacingAndGlyphs">2°C  Partly sunny</text>
<path d="M1004 709l5-5 5 5" fill="none" stroke="#e8e8e8" stroke-width="1.200"/>
<rect x="1028.500" y="697" width="5" height="11" rx="2.500" fill="#e8e8e8"/><path d="M1026 705c0 5 3 6 5.500 6s5.500-1 5.500-6M1031.500 711v3" fill="none" stroke="#e8e8e8"/>
<rect x="1046" y="701" width="14" height="9" fill="none" stroke="#e8e8e8"/><rect x="1046" y="701" width="6" height="5" fill="#e8e8e8"/>
<g fill="none" stroke="#e8e8e8"><circle cx="1076" cy="705" r="7"/><ellipse cx="1076" cy="705" rx="3" ry="7"/><path d="M1069 705h14"/><path d="M1094 703v5h2l3 3v-11l-3 3zM1102 702c1.500 2 1.500 5 0 7"/><rect x="1116.500" y="699.500" width="19" height="12" rx="1"/><path d="M1119 703h14M1119 706h14M1121 709h10"/></g>
<text x="1146" y="711" font-size="13.500" fill="#e8e8e8" textLength="21" lengthAdjust="spacingAndGlyphs">ENG</text>
<text x="1181" y="711" font-size="13.500" fill="#e8e8e8" textLength="44" lengthAdjust="spacingAndGlyphs">11:26 PM</text>
<g fill="none" stroke="#e8e8e8" stroke-width="1.100"><path d="M1243.500 699.500h14v10h-4v3l-3-3h-7zM1246 702.500h9M1246 705.500h9"/></g>
<rect x="1278" y="692" width="2" height="28" fill="#1f1a19"/>
</svg>
</body></html>
